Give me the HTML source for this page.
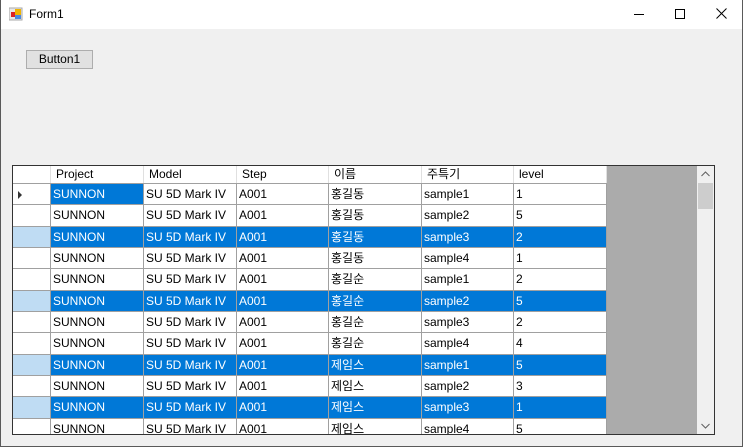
<!DOCTYPE html>
<html><head><meta charset="utf-8"><style>
*{margin:0;padding:0;box-sizing:border-box}
body{width:743px;height:447px;background:#f0f0f0;position:relative;overflow:hidden;font-family:"Liberation Sans","Noto Sans CJK KR",sans-serif;font-size:12px;color:#000}
.win{position:absolute;left:0;top:0;width:743px;height:447px;border:1px solid #5a5a5a;border-top:none}
.title{position:absolute;left:1px;top:0;width:741px;height:29px;background:#fff}
.btn{position:absolute;left:26px;top:50px;width:67px;height:19px;background:#e1e1e1;border:1px solid #adadad;text-align:center;line-height:17px;font-size:12px}
.grid{position:absolute;left:12px;top:165px;width:703px;height:270px;border:1px solid #333;background:#ababab;overflow:hidden}
.row{position:absolute;left:0;width:594px;height:21px;background:#fff}
.row.h{height:22px}
.c{position:absolute;top:0;height:100%;border-right:1px solid #a0a0a0;border-bottom:1px solid #a0a0a0;padding-left:2px;line-height:20px;white-space:nowrap;overflow:hidden}
.rh{position:absolute;left:0;top:0;width:38px;height:100%;border-right:1px solid #a0a0a0;border-bottom:1px solid #a0a0a0;background:#fff}
.s .c{background:#0078d7;color:#fff}
.s .rh{background:#bfdcf3}
.c1{left:38px;width:93px}.c2{left:131px;width:93px}.c3{left:224px;width:92px}.c4{left:316px;width:93px}.c5{left:409px;width:92px}.c6{left:501px;width:93px}
.hdr{position:absolute;left:0;top:0;width:594px;height:18px;background:#fff;border-bottom:1px solid #a0a0a0}
.hdr .c{height:17px;line-height:16px;border-bottom:none;border-right:1px solid #e0e0e0;padding-left:5px}
.sb{position:absolute;left:684px;top:0;width:17px;height:268px;background:#f0f0f0}
</style></head><body>
<div class="win"></div>
<div class="title">
<svg style="position:absolute;left:8px;top:7px" width="14" height="14" viewBox="0 0 14 14"><rect x="0" y="1" width="13" height="12" fill="#e8e8e8" stroke="#aaa"/><rect x="2" y="5" width="4" height="5" fill="#d22"/><rect x="6" y="2" width="6" height="6" fill="#f0b400"/><rect x="6" y="8" width="6" height="4" fill="#4a8ae0"/></svg>
<span style="position:absolute;left:28px;top:7px;font-size:12px">Form1</span>
<div style="position:absolute;left:633px;top:14px;width:10px;height:1px;background:#000"></div>
<div style="position:absolute;left:674px;top:9px;width:10px;height:10px;border:1px solid #000"></div>
<svg style="position:absolute;left:715px;top:8px" width="11" height="11"><path d="M0.5 0.5L10.5 10.5M10.5 0.5L0.5 10.5" stroke="#000" stroke-width="1"/></svg>
</div>
<div class="btn">Button1</div>
<div class="grid">
<div class="hdr"><div class="rh" style="height:17px;border:none;border-right:1px solid #e0e0e0"></div><div class="c c1">Project</div><div class="c c2">Model</div><div class="c c3">Step</div><div class="c c4">이름</div><div class="c c5">주특기</div><div class="c c6">level</div></div>
<div class="row" style="top:18px"><div class="rh"><svg style="position:absolute;left:5px;top:7px" width="5" height="8"><path d="M0 0L4 4L0 8Z" fill="#333"/></svg></div><div class="c c1" style="background:#0078d7;color:#fff">SUNNON</div><div class="c c2">SU 5D Mark IV</div><div class="c c3">A001</div><div class="c c4">홍길동</div><div class="c c5">sample1</div><div class="c c6">1</div></div>
<div class="row h" style="top:39px"><div class="rh"></div><div class="c c1">SUNNON</div><div class="c c2">SU 5D Mark IV</div><div class="c c3">A001</div><div class="c c4">홍길동</div><div class="c c5">sample2</div><div class="c c6">5</div></div>
<div class="row s" style="top:61px"><div class="rh"></div><div class="c c1">SUNNON</div><div class="c c2">SU 5D Mark IV</div><div class="c c3">A001</div><div class="c c4">홍길동</div><div class="c c5">sample3</div><div class="c c6">2</div></div>
<div class="row" style="top:82px"><div class="rh"></div><div class="c c1">SUNNON</div><div class="c c2">SU 5D Mark IV</div><div class="c c3">A001</div><div class="c c4">홍길동</div><div class="c c5">sample4</div><div class="c c6">1</div></div>
<div class="row h" style="top:103px"><div class="rh"></div><div class="c c1">SUNNON</div><div class="c c2">SU 5D Mark IV</div><div class="c c3">A001</div><div class="c c4">홍길순</div><div class="c c5">sample1</div><div class="c c6">2</div></div>
<div class="row s" style="top:125px"><div class="rh"></div><div class="c c1">SUNNON</div><div class="c c2">SU 5D Mark IV</div><div class="c c3">A001</div><div class="c c4">홍길순</div><div class="c c5">sample2</div><div class="c c6">5</div></div>
<div class="row" style="top:146px"><div class="rh"></div><div class="c c1">SUNNON</div><div class="c c2">SU 5D Mark IV</div><div class="c c3">A001</div><div class="c c4">홍길순</div><div class="c c5">sample3</div><div class="c c6">2</div></div>
<div class="row h" style="top:167px"><div class="rh"></div><div class="c c1">SUNNON</div><div class="c c2">SU 5D Mark IV</div><div class="c c3">A001</div><div class="c c4">홍길순</div><div class="c c5">sample4</div><div class="c c6">4</div></div>
<div class="row s" style="top:189px"><div class="rh"></div><div class="c c1">SUNNON</div><div class="c c2">SU 5D Mark IV</div><div class="c c3">A001</div><div class="c c4">제임스</div><div class="c c5">sample1</div><div class="c c6">5</div></div>
<div class="row" style="top:210px"><div class="rh"></div><div class="c c1">SUNNON</div><div class="c c2">SU 5D Mark IV</div><div class="c c3">A001</div><div class="c c4">제임스</div><div class="c c5">sample2</div><div class="c c6">3</div></div>
<div class="row s h" style="top:231px"><div class="rh"></div><div class="c c1">SUNNON</div><div class="c c2">SU 5D Mark IV</div><div class="c c3">A001</div><div class="c c4">제임스</div><div class="c c5">sample3</div><div class="c c6">1</div></div>
<div class="row h" style="top:253px"><div class="rh"></div><div class="c c1">SUNNON</div><div class="c c2">SU 5D Mark IV</div><div class="c c3">A001</div><div class="c c4">제임스</div><div class="c c5">sample4</div><div class="c c6">5</div></div>
<div class="sb">
<svg style="position:absolute;left:4px;top:5px" width="9" height="6"><path d="M0.5 5L4.5 1L8.5 5" stroke="#606060" fill="none"/></svg>
<div style="position:absolute;left:1px;top:17px;width:15px;height:26px;background:#cdcdcd"></div>
<svg style="position:absolute;left:4px;top:257px" width="9" height="6"><path d="M0.5 1L4.5 5L8.5 1" stroke="#606060" fill="none"/></svg>
</div>
</div>
</body></html>
